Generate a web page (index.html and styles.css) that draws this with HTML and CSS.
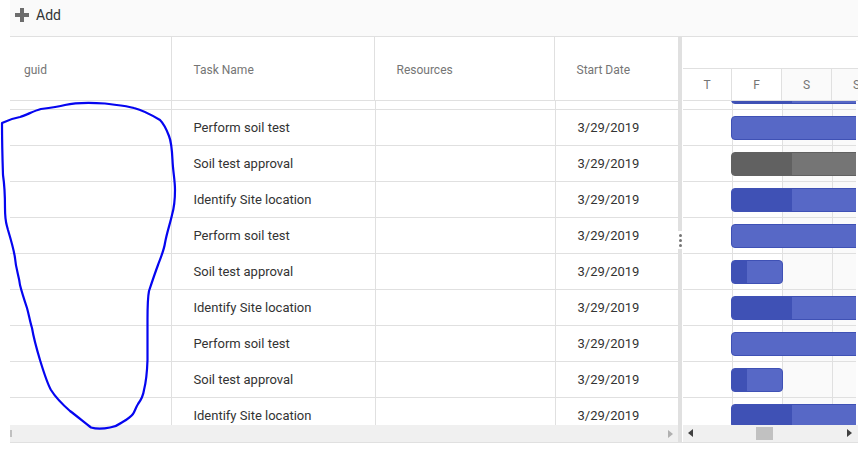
FILE: index.html
```html
<!DOCTYPE html>
<html lang="en">
<head>
<meta charset="utf-8">
<title>Gantt</title>
<link rel="stylesheet" href="styles.css">
</head>
<body>
<div class="app">
  <div class="toolbar">
    <svg class="plus" width="14" height="14" viewBox="0 0 14 14"><path d="M5 0h4v5h5v4H9v5H5V9H0V5h5z"/></svg>
    <span>Add</span>
  </div>
  <div class="main">
    <section class="grid">
      <div class="grid-head">
        <div class="hcell guid">guid</div>
        <div class="hcell task">Task Name</div>
        <div class="hcell res">Resources</div>
        <div class="hcell start">Start Date</div>
      </div>
      <div class="grid-body">
        <div class="row"><div class="c1"></div><div class="c2"></div><div class="c3"></div><div class="c4"></div></div>
        <div class="row"><div class="c1"></div><div class="c2">Perform soil test</div><div class="c3"></div><div class="c4">3/29/2019</div></div>
        <div class="row"><div class="c1"></div><div class="c2">Soil test approval</div><div class="c3"></div><div class="c4">3/29/2019</div></div>
        <div class="row"><div class="c1"></div><div class="c2">Identify Site location</div><div class="c3"></div><div class="c4">3/29/2019</div></div>
        <div class="row"><div class="c1"></div><div class="c2">Perform soil test</div><div class="c3"></div><div class="c4">3/29/2019</div></div>
        <div class="row"><div class="c1"></div><div class="c2">Soil test approval</div><div class="c3"></div><div class="c4">3/29/2019</div></div>
        <div class="row"><div class="c1"></div><div class="c2">Identify Site location</div><div class="c3"></div><div class="c4">3/29/2019</div></div>
        <div class="row"><div class="c1"></div><div class="c2">Perform soil test</div><div class="c3"></div><div class="c4">3/29/2019</div></div>
        <div class="row"><div class="c1"></div><div class="c2">Soil test approval</div><div class="c3"></div><div class="c4">3/29/2019</div></div>
        <div class="row"><div class="c1"></div><div class="c2">Identify Site location</div><div class="c3"></div><div class="c4">3/29/2019</div></div>
      </div>
      <div class="scroll scroll-left">
        <i class="arrow a-left-clip"></i>
        <i class="arrow a-right-light"></i>
      </div>
    </section>
    <div class="splitter"><div class="grip"><b></b><b></b><b></b></div></div>
    <section class="chart">
      <div class="chart-head">
        <div class="tier-top"></div>
        <div class="tier">
          <div class="day first">T</div>
          <div class="day">F</div>
          <div class="day off">S</div>
          <div class="day off">S</div>
        </div>
      </div>
      <div class="chart-body">
        <div class="trow"><i></i><i></i><i class="off"></i><i class="off"></i><div class="bar long"><span class="prog"></span></div></div>
        <div class="trow"><i></i><i></i><i class="off"></i><i class="off"></i><div class="bar long"></div></div>
        <div class="trow"><i></i><i></i><i class="off"></i><i class="off"></i><div class="bar long gray"><span class="prog"></span></div></div>
        <div class="trow"><i></i><i></i><i class="off"></i><i class="off"></i><div class="bar long"><span class="prog"></span></div></div>
        <div class="trow"><i></i><i></i><i class="off"></i><i class="off"></i><div class="bar long"></div></div>
        <div class="trow"><i></i><i></i><i class="off"></i><i class="off"></i><div class="bar short"><span class="prog"></span></div></div>
        <div class="trow"><i></i><i></i><i class="off"></i><i class="off"></i><div class="bar long"><span class="prog"></span></div></div>
        <div class="trow"><i></i><i></i><i class="off"></i><i class="off"></i><div class="bar long"></div></div>
        <div class="trow"><i></i><i></i><i class="off"></i><i class="off"></i><div class="bar short"><span class="prog"></span></div></div>
        <div class="trow"><i></i><i></i><i class="off"></i><i class="off"></i><div class="bar long"><span class="prog"></span></div></div>
      </div>
      <div class="scroll scroll-right">
        <i class="arrow a-left"></i>
        <span class="thumb"></span>
        <i class="arrow a-right"></i>
      </div>
    </section>
  </div>
</div>
<svg class="scribble" width="858" height="451" viewBox="0 0 858 451"><path d="M2 123C8 120 14 118 20 117C27 115 33 111 41 109C50 108 58 107 65 105C76 102.500 90 102.500 105 103.500C115 105 125 105.500 134 108C142 110 150 114 160 120C164 124 166 128 169 136C171 141 172 150 172.500 160C173 172 175 180 175 190C175 200 174 208 172 215C170 224 167 232 165 243C164 250 161 257 158 265C155 273 152 282 149 291C148 296 147.500 305 147.500 320L147.500 360C147 375 146 382 144 390C143 397 141 400 138 404C136 407 135 411 133 414C130 418 126 420 121 423C117 426 114 427 110 427.500C103 429 96 429 91 427.500C85 423 78 417 70 411C62 404 56 398 51 390C47 383 44 373 40 360C37 350 34 340 32 328C30 322 29 315 27 308C24 299 22 293 20 285C19 276 16 270 15 258C14 250 11 240 8 230C6 222 5 222 5 208C5 196 4.500 185 3 175C2.500 160 2 140 2 123Z"/></svg>
</body>
</html>
```
FILE: styles.css
```css
* { box-sizing: border-box; }
html, body { margin: 0; padding: 0; background: #fff; }
body {
  position: relative;
  width: 858px;
  height: 451px;
  overflow: hidden;
  font-family: Roboto, "Liberation Sans", sans-serif;
}
.app { margin-left: 10px; width: 848px; }
.toolbar {
  height: 37px;
  background: #fafafa;
  border-bottom: 1px solid #e0e0e0;
  display: flex;
  align-items: center;
  gap: 7px;
  padding: 0 0 6px 5px;
  font-size: 14px;
  color: #333;
}
.plus { fill: #6d6d6d; display: block; }
.main {
  display: flex;
  height: 406px;
  border-bottom: 1px solid #e0e0e0;
}
.grid { width: 668px; display: flex; flex-direction: column; flex: none; }
.grid-head {
  height: 64px;
  flex: none;
  display: grid;
  grid-template-columns: 162px 203px 180px 1fr;
  border-bottom: 1px solid #e0e0e0;
}
.hcell {
  display: flex;
  align-items: center;
  font-size: 12px;
  color: #757575;
  border-right: 1px solid #e0e0e0;
  padding-top: 2px;
}
.hcell.guid { padding-left: 14px; }
.hcell.task { padding-left: 21.500px; }
.hcell.res { padding-left: 21.500px; }
.hcell.start { padding-left: 21.500px; border-right: 0; }
.grid-body { height: 324px; flex: none; overflow: hidden; }
.row {
  height: 36px;
  display: grid;
  grid-template-columns: 162px 204px 180px 1fr;
  border-bottom: 1px solid #e0e0e0;
  font-size: 13px;
  color: #333;
  line-height: 35px;
}
.row:first-child { margin-top: -27px; }
.c1, .c2, .c3 { border-right: 1px solid #e0e0e0; }
.c2 { padding-left: 21.500px; }
.c4 { padding-left: 21.500px; }
.scroll {
  height: 17px;
  flex: none;
  background: #f0f0f0;
  display: flex;
  align-items: center;
  position: relative;
}
.scroll-left { justify-content: space-between; }
.arrow { display: block; width: 0; height: 0; border-style: solid; }
.a-left-clip {
  width: 2px;
  height: 7px;
  border: 0;
  background: #c0c0c0;
}
.a-right-light {
  border-width: 4px 0 4px 5px;
  border-color: transparent transparent transparent #b0b0b0;
  margin-right: 5px;
}
.splitter {
  width: 5px;
  flex: none;
  background: #e0e0e0;
  border-right: 1px solid #fff;
  position: relative;
}
.grip {
  position: absolute;
  left: 0;
  top: 194px;
  width: 4px;
  height: 18px;
  background: #fff;
  display: flex;
  flex-direction: column;
  justify-content: center;
  align-items: center;
  gap: 2px;
}
.grip b { width: 3px; height: 3px; border-radius: 50%; background: #757575; }
.chart { flex: 1; min-width: 0; display: flex; flex-direction: column; }
.chart-head { height: 64px; flex: none; }
.tier-top { height: 32px; border-bottom: 1px solid #e0e0e0; }
.tier { height: 32px; display: flex; border-bottom: 1px solid #e0e0e0; border-left: 0; }
.day {
  width: 50px;
  flex: none;
  display: flex;
  align-items: center;
  justify-content: center;
  font-size: 12px;
  color: #757575;
  border-right: 1px solid #e0e0e0;
}
.day.first { width: 49px; }
.day.off { background: #fafafa; }
.chart-body { height: 324px; width: 173px; flex: none; overflow: hidden; }
.trow {
  height: 36px;
  display: flex;
  position: relative;
  overflow: hidden;
  border-bottom: 1px solid #e0e0e0;
}
.trow:first-child { margin-top: -27px; }
.trow i {
  display: block;
  width: 50px;
  flex: none;
  border-right: 1px solid #e0e0e0;
}
.trow i.off { background: #fafafa; }
.bar {
  position: absolute;
  left: 48px;
  top: 6px;
  height: 24px;
  background: #5768c6;
  border: 1px solid #3f51b5;
  border-radius: 4px;
  overflow: hidden;
}
.bar.long { width: 200px; }
.bar.short { width: 52px; }
.prog { display: block; height: 100%; background: #3f51b5; }
.bar.long .prog { width: 60px; }
.bar.short .prog { width: 15px; }
.bar.gray { background: #757575; border-color: #616161; }
.bar.gray .prog { background: #616161; }
.scroll-right { width: 175px; }
.a-left {
  position: absolute;
  left: 5px;
  top: 4px;
  border-width: 4px 5px 4px 0;
  border-color: transparent #404040 transparent transparent;
}
.a-right {
  position: absolute;
  left: 164px;
  top: 4px;
  border-width: 4px 0 4px 5px;
  border-color: transparent transparent transparent #404040;
}
.thumb {
  position: absolute;
  left: 73px;
  top: 2px;
  width: 17px;
  height: 13px;
  background: #c1c1c1;
}
.scribble {
  position: absolute;
  left: 0;
  top: 0;
  pointer-events: none;
}
.scribble path {
  fill: none;
  stroke: #0505f0;
  stroke-width: 2.2;
  stroke-linejoin: round;
}
```
